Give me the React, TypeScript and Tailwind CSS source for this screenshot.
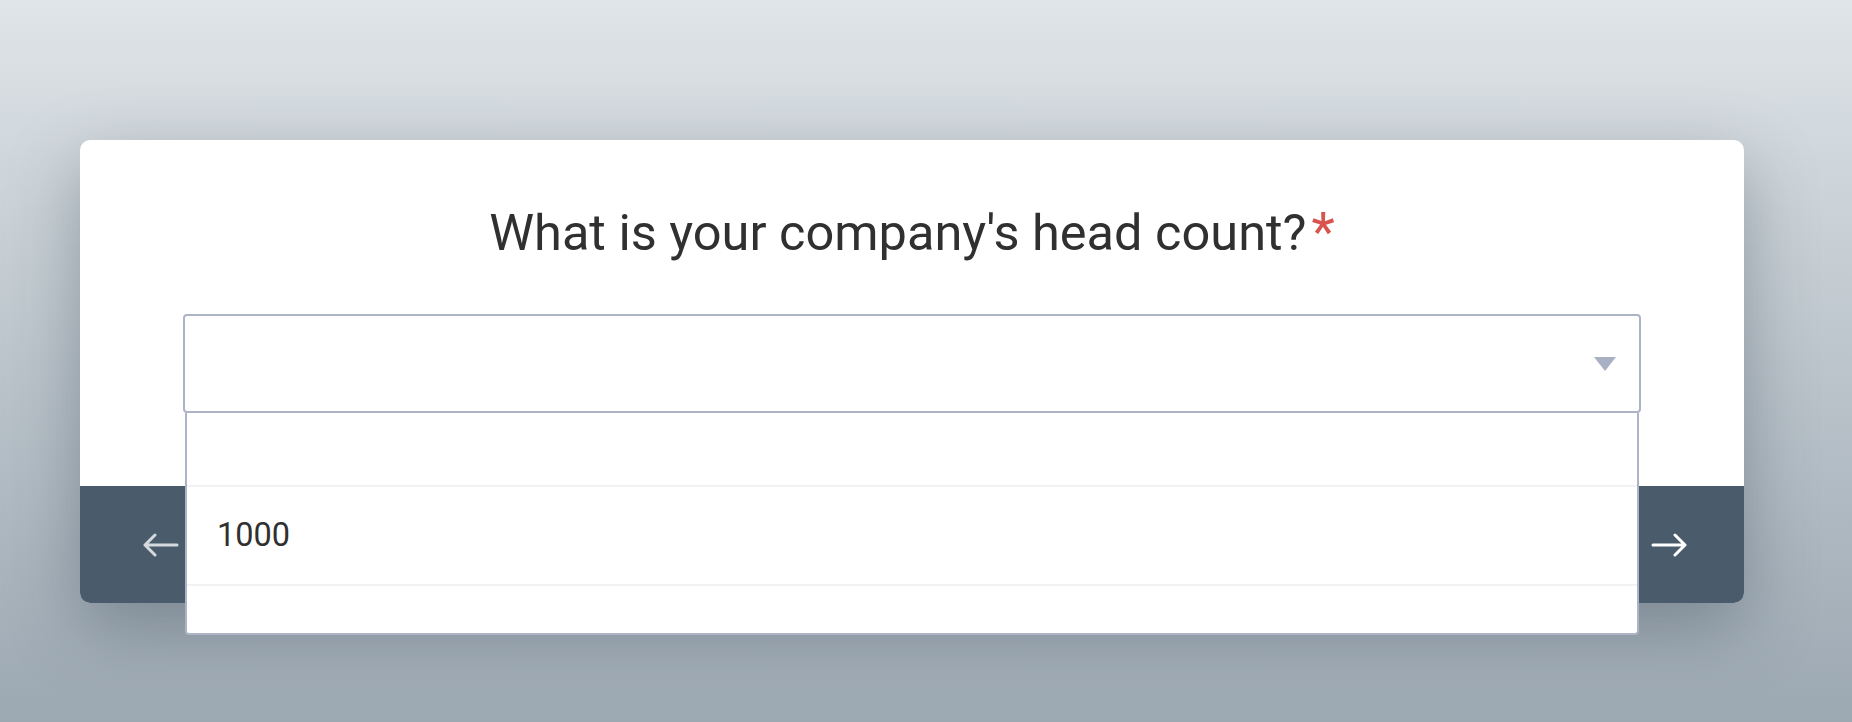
import { useState } from "react";

const options = ["", "1000", ""];

export default function App() {
  const [selected] = useState<string | null>(null);

  return (
    <div
      className="min-h-[722px] w-full overflow-hidden bg-gradient-to-b from-[#dfe5e8] via-[#bcc5cc] to-[#9ca8b2] pt-[140px] pl-[80px]"
      style={{ fontFamily: "Roboto, 'Liberation Sans', sans-serif" }}
    >
      <div className="relative w-[1664px] rounded-[10px] bg-white shadow-[0_24px_70px_rgba(40,55,70,0.35)]">
        {/* Question */}
        <div className="h-[346px] px-[103px] pt-[63px]">
          <h1 className="h-[60px] text-center text-[50.5px] leading-[60px] font-normal text-[#303030]">
            What is your company's head count?
            <span className="ml-[5px] text-[54px] leading-[0px] text-[#d9534f]">*</span>
          </h1>

          <div className="mt-[51px] flex h-[99px] items-center justify-end rounded-[4px] border-2 border-[#adb4c6] bg-white pr-[23px]">
            {selected}
            <svg width="22" height="14" viewBox="0 0 22 14">
              <path d="M0 0h22L11 14z" fill="#a9b0c3" />
            </svg>
          </div>
        </div>

        {/* Footer nav */}
        <div className="flex h-[117px] items-center justify-between rounded-b-[10px] bg-[#4a5c6b] pl-[63px] pr-[57px]">
          <button className="text-[#d5dade]">
            <svg width="36" height="24" viewBox="0 0 36 24" fill="none" stroke="currentColor" strokeWidth="3" strokeLinecap="round" strokeLinejoin="round">
              <path d="M34 12H2M12 2 2 12l10 10" />
            </svg>
          </button>
          <button className="text-white">
            <svg width="36" height="24" viewBox="0 0 36 24" fill="none" stroke="currentColor" strokeWidth="3" strokeLinecap="round" strokeLinejoin="round">
              <path d="M2 12h32M24 2l10 10-10 10" />
            </svg>
          </button>
        </div>

        {/* Open options list */}
        <div className="absolute top-[273px] left-[105px] h-[222px] w-[1454px] overflow-hidden rounded-b-[4px] border-x-2 border-b-2 border-[#adb4c6] bg-white">
          {options.map((opt, i) => (
            <div
              key={i}
              className={`flex items-center border-b-2 border-[#f1f2f4] pl-[30px] text-[32.5px] text-[#303030] ${i === 0 ? "h-[74px]" : "h-[99px]"}`}
            >
              {opt}
            </div>
          ))}
        </div>
      </div>
    </div>
  );
}
